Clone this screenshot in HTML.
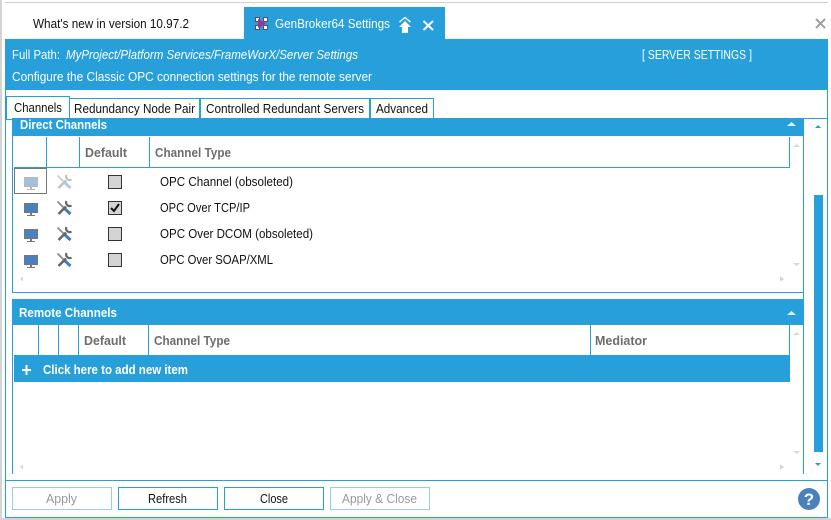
<!DOCTYPE html>
<html>
<head>
<meta charset="utf-8">
<style>
html,body{margin:0;padding:0;background:#fff;width:831px;height:520px;overflow:hidden}
svg{display:block}
text{font-family:"Liberation Sans",sans-serif;font-size:12.5px;fill:#111}
.w{fill:#fff}
.b{font-weight:bold}
.h{font-weight:bold;fill:#6d6d6d}
.d{fill:#999}
</style>
</head>
<body>
<svg width="831" height="520" viewBox="0 0 831 520" xmlns="http://www.w3.org/2000/svg" shape-rendering="crispEdges">
<defs>
<g id="mon">
<rect x="0" y="0" width="14" height="10" fill="#777"/>
<rect x="1" y="1" width="12" height="8" fill="#4a80bd"/>
<rect x="6" y="10" width="2" height="2" fill="#777"/>
<rect x="3" y="12" width="8" height="1" fill="#777"/>
</g>
<g id="wr" shape-rendering="auto" fill="none">
<path d="M1.5 1.5L7.5 7.5" stroke="#8a8a8a" stroke-width="1.8"/>
<path d="M8 8L14.5 14" stroke="#3f7cc0" stroke-width="3"/>
<path d="M2.5 14L10 6.5" stroke="#666" stroke-width="2.6"/>
<path d="M10.5 1A3.5 3.5 0 0 0 15.5 5.5" stroke="#666" stroke-width="2.2"/>
</g>
</defs>

<!-- outer window lines -->
<rect x="5" y="2" width="823" height="1" fill="#d0d0d0"/>
<rect x="0" y="0" width="2" height="520" fill="#d4d4d4"/>
<rect x="0" y="518" width="831" height="2" fill="#d4d4d4"/>

<!-- doc tabs -->
<text x="33" y="28" textLength="156" lengthAdjust="spacingAndGlyphs">What's new in version 10.97.2</text>
<rect x="244" y="7" width="201" height="33" fill="#269fdb"/>
<g>
<rect x="255" y="17" width="13" height="13" fill="none"/>
<rect x="255.5" y="17.5" width="4" height="4" fill="#fff" stroke="#5a4a7a"/>
<rect x="263.5" y="17.5" width="4" height="4" fill="#fff" stroke="#5a4a7a"/>
<rect x="255.5" y="25.5" width="4" height="4" fill="#fff" stroke="#5a4a7a"/>
<rect x="263.5" y="25.5" width="4" height="4" fill="#fff" stroke="#5a4a7a"/>
<path d="M258 19L266 23.5L258 28Z" fill="#a0308c" shape-rendering="auto"/>
</g>
<text class="w" x="275" y="28" textLength="115" lengthAdjust="spacingAndGlyphs">GenBroker64 Settings</text>
<path d="M405 21L411 27H408V33H402V27H399Z" fill="#fff" shape-rendering="auto"/>
<path d="M399.5 22L405 17.5L410.5 22" fill="none" stroke="#fff" stroke-width="1.4" shape-rendering="auto"/>
<path d="M423.5 21L433 30M433 21L423.5 30" stroke="#fff" stroke-width="2" fill="none" shape-rendering="auto"/>
<path d="M816 19L825 28M825 19L816 28" stroke="#a0a0a0" stroke-width="2" fill="none" shape-rendering="auto"/>

<!-- header band -->
<rect x="5" y="39" width="823" height="51" fill="#269fdb"/>
<text class="w" x="12" y="59" textLength="48" lengthAdjust="spacingAndGlyphs">Full Path:</text>
<text class="w" x="66" y="59" textLength="292" lengthAdjust="spacingAndGlyphs" font-style="italic">MyProject/Platform Services/FrameWorX/Server Settings</text>
<text class="w" x="642" y="59" textLength="110" lengthAdjust="spacingAndGlyphs">[ SERVER SETTINGS ]</text>
<text class="w" x="12" y="81" textLength="360" lengthAdjust="spacingAndGlyphs">Configure the Classic OPC connection settings for the remote server</text>

<!-- outer panel borders -->
<rect x="5" y="90" width="1" height="428" fill="#269fdb"/>
<rect x="827" y="90" width="1" height="428" fill="#269fdb"/>
<rect x="5" y="517" width="823" height="1" fill="#269fdb"/>
<rect x="5" y="480" width="823" height="1" fill="#269fdb"/>

<!-- tabs -->
<rect x="6.5" y="96.5" width="63" height="23" fill="#fff" stroke="#269fdb"/>
<rect x="69.5" y="98.5" width="130" height="20" fill="#fff" stroke="#269fdb"/>
<rect x="200.5" y="98.5" width="169" height="20" fill="#fff" stroke="#269fdb"/>
<rect x="370.5" y="98.5" width="63" height="20" fill="#fff" stroke="#269fdb"/>
<text x="14" y="112" textLength="48" lengthAdjust="spacingAndGlyphs">Channels</text>
<text x="74" y="113" textLength="121" lengthAdjust="spacingAndGlyphs">Redundancy Node Pair</text>
<text x="206" y="113" textLength="158" lengthAdjust="spacingAndGlyphs">Controlled Redundant Servers</text>
<text x="376" y="113" textLength="52" lengthAdjust="spacingAndGlyphs">Advanced</text>

<!-- scroll area -->
<rect x="803" y="118" width="25" height="1" fill="#269fdb"/>
<rect x="803" y="118" width="1" height="356" fill="#269fdb"/>
<rect x="814" y="195" width="9" height="257" fill="#269fdb"/>
<path d="M815 128L818 125L821 128Z" fill="#269fdb" shape-rendering="auto"/>
<path d="M815 463L821 463L818 466Z" fill="#269fdb" shape-rendering="auto"/>

<!-- Direct Channels -->
<rect x="12" y="118" width="792" height="18" fill="#269fdb"/>
<text class="w b" x="20" y="129" textLength="87" lengthAdjust="spacingAndGlyphs">Direct Channels</text>
<path d="M787 126L791.5 122L796 126Z" fill="#dff1fb" shape-rendering="auto"/>
<rect x="12" y="136" width="1" height="157" fill="#269fdb"/>
<rect x="12" y="292" width="792" height="1" fill="#269fdb"/>
<rect x="14" y="167" width="776" height="1" fill="#269fdb"/>
<rect x="789" y="137" width="1" height="31" fill="#269fdb"/>
<rect x="46" y="137" width="1" height="31" fill="#269fdb"/>
<rect x="79" y="137" width="1" height="31" fill="#269fdb"/>
<rect x="149" y="137" width="1" height="31" fill="#269fdb"/>
<text class="h" x="85" y="157" textLength="42" lengthAdjust="spacingAndGlyphs">Default</text>
<text class="h" x="155" y="157" textLength="76" lengthAdjust="spacingAndGlyphs">Channel Type</text>
<path d="M793 147L796.5 144L800 147Z" fill="#d8d8d8" shape-rendering="auto"/>
<path d="M793 263L800 263L796.5 266Z" fill="#d8d8d8" shape-rendering="auto"/>
<path d="M20 279L23 276.5L23 281.5Z" fill="#d8d8d8" shape-rendering="auto"/>
<path d="M780 276.5L784 279L780 281.5Z" fill="#d0d0d0" shape-rendering="auto"/>

<!-- rows -->
<rect x="14.5" y="168.5" width="32" height="25" fill="#fff" stroke="#777"/>
<use href="#mon" x="24" y="177" opacity=".5"/>
<use href="#wr" x="56" y="174" opacity=".4"/>
<use href="#mon" x="24" y="203"/>
<use href="#wr" x="56" y="200"/>
<use href="#mon" x="24" y="229"/>
<use href="#wr" x="56" y="226"/>
<use href="#mon" x="24" y="255"/>
<use href="#wr" x="56" y="252"/>

<rect x="108.5" y="175.5" width="13" height="13" fill="#d4d4d4" stroke="#333"/>
<rect x="108.5" y="201.5" width="13" height="13" fill="#d4d4d4" stroke="#333"/>
<path d="M111 208L114 211L119 204" stroke="#111" stroke-width="2" fill="none" shape-rendering="auto"/>
<rect x="108.5" y="227.5" width="13" height="13" fill="#d4d4d4" stroke="#333"/>
<rect x="108.5" y="253.5" width="13" height="13" fill="#d4d4d4" stroke="#333"/>

<text x="160" y="186" textLength="133" lengthAdjust="spacingAndGlyphs">OPC Channel (obsoleted)</text>
<text x="160" y="212" textLength="90" lengthAdjust="spacingAndGlyphs">OPC Over TCP/IP</text>
<text x="160" y="238" textLength="153" lengthAdjust="spacingAndGlyphs">OPC Over DCOM (obsoleted)</text>
<text x="160" y="264" textLength="113" lengthAdjust="spacingAndGlyphs">OPC Over SOAP/XML</text>

<!-- Remote Channels -->
<rect x="12" y="299" width="792" height="26" fill="#269fdb"/>
<text class="w b" x="19" y="317" textLength="98" lengthAdjust="spacingAndGlyphs">Remote Channels</text>
<path d="M787 315L791.5 311L796 315Z" fill="#dff1fb" shape-rendering="auto"/>
<rect x="12" y="325" width="1" height="149" fill="#269fdb"/>
<rect x="38" y="325" width="1" height="30" fill="#269fdb"/>
<rect x="58" y="325" width="1" height="30" fill="#269fdb"/>
<rect x="78" y="325" width="1" height="30" fill="#269fdb"/>
<rect x="148" y="325" width="1" height="30" fill="#269fdb"/>
<rect x="590" y="325" width="1" height="30" fill="#269fdb"/>
<rect x="789" y="325" width="1" height="30" fill="#269fdb"/>
<text class="h" x="84" y="345" textLength="42" lengthAdjust="spacingAndGlyphs">Default</text>
<text class="h" x="154" y="345" textLength="76" lengthAdjust="spacingAndGlyphs">Channel Type</text>
<text class="h" x="595" y="345" textLength="52" lengthAdjust="spacingAndGlyphs">Mediator</text>
<path d="M793 335L796.5 332L800 335Z" fill="#d8d8d8" shape-rendering="auto"/>
<rect x="14" y="355" width="776" height="27" fill="#269fdb"/>
<rect x="22" y="369" width="9" height="2" fill="#fff"/>
<rect x="25.5" y="365" width="2" height="10" fill="#fff"/>
<text class="w b" x="43" y="374" textLength="145" lengthAdjust="spacingAndGlyphs">Click here to add new item</text>
<path d="M793 451L800 451L796.5 454Z" fill="#d8d8d8" shape-rendering="auto"/>
<path d="M20 467L23 464.5L23 469.5Z" fill="#d8d8d8" shape-rendering="auto"/>
<path d="M780 464.5L784 467L780 469.5Z" fill="#d0d0d0" shape-rendering="auto"/>

<!-- buttons -->
<rect x="12.5" y="487.5" width="99" height="22" fill="#fff" stroke="#93cfed"/>
<rect x="118.5" y="487.5" width="99" height="22" fill="#fff" stroke="#269fdb"/>
<rect x="224.5" y="487.5" width="99" height="22" fill="#fff" stroke="#269fdb"/>
<rect x="330.5" y="487.5" width="99" height="22" fill="#fff" stroke="#93cfed"/>
<text class="d" x="46" y="503" textLength="31" lengthAdjust="spacingAndGlyphs">Apply</text>
<text x="148" y="503" textLength="39" lengthAdjust="spacingAndGlyphs">Refresh</text>
<text x="260" y="503" textLength="28" lengthAdjust="spacingAndGlyphs">Close</text>
<text class="d" x="342" y="503" textLength="75" lengthAdjust="spacingAndGlyphs">Apply &amp; Close</text>

<!-- help -->
<circle cx="809" cy="499" r="11" fill="#4a80bd" shape-rendering="auto"/>
<text x="809" y="505" text-anchor="middle" style="font-size:17px;font-weight:bold;fill:#fff">?</text>
</svg>
</body>
</html>
